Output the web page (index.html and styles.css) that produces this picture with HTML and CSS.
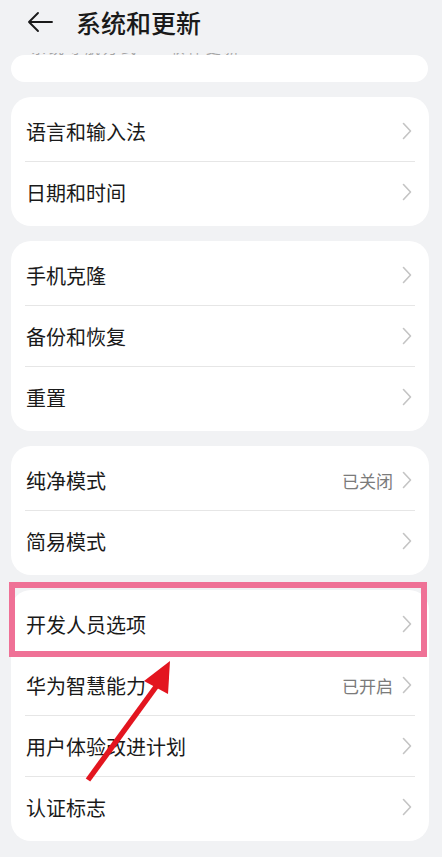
FILE: index.html
```html
<!DOCTYPE html>
<html lang="zh-CN">
<head>
<meta charset="utf-8">
<link rel="stylesheet" href="styles.css">
<title>系统和更新</title>
</head>
<body>
<div class="page">
  <header class="header">
    <svg class="back" width="26" height="22" viewBox="0 0 26 22">
      <path d="M25 11 H2 M11 2 L2 11 L11 20" fill="none" stroke="#1a1a1a" stroke-width="1.9" stroke-linecap="round" stroke-linejoin="round"/>
    </svg>
    <h1 class="title">系统和更新</h1>
  </header>

  <div class="ghost"><span class="ghost-text">系统导航方式 · 软件更新 ›</span></div>
  <div class="card card-partial"></div>

  <section class="card">
    <div class="row"><span class="label">语言和输入法</span><svg class="chev" width="10" height="18" viewBox="0 0 10 18"><path d="M1.5 1.5 L8.5 9 L1.5 16.5" fill="none" stroke="#c4c4c4" stroke-width="1.6" stroke-linecap="round" stroke-linejoin="round"/></svg></div>
    <div class="divider"></div>
    <div class="row"><span class="label">日期和时间</span><svg class="chev" width="10" height="18" viewBox="0 0 10 18"><path d="M1.5 1.5 L8.5 9 L1.5 16.5" fill="none" stroke="#c4c4c4" stroke-width="1.6" stroke-linecap="round" stroke-linejoin="round"/></svg></div>
  </section>

  <section class="card">
    <div class="row"><span class="label">手机克隆</span><svg class="chev" width="10" height="18" viewBox="0 0 10 18"><path d="M1.5 1.5 L8.5 9 L1.5 16.5" fill="none" stroke="#c4c4c4" stroke-width="1.6" stroke-linecap="round" stroke-linejoin="round"/></svg></div>
    <div class="divider"></div>
    <div class="row"><span class="label">备份和恢复</span><svg class="chev" width="10" height="18" viewBox="0 0 10 18"><path d="M1.5 1.5 L8.5 9 L1.5 16.5" fill="none" stroke="#c4c4c4" stroke-width="1.6" stroke-linecap="round" stroke-linejoin="round"/></svg></div>
    <div class="divider"></div>
    <div class="row"><span class="label">重置</span><svg class="chev" width="10" height="18" viewBox="0 0 10 18"><path d="M1.5 1.5 L8.5 9 L1.5 16.5" fill="none" stroke="#c4c4c4" stroke-width="1.6" stroke-linecap="round" stroke-linejoin="round"/></svg></div>
  </section>

  <section class="card">
    <div class="row"><span class="label">纯净模式</span><span class="value">已关闭</span><svg class="chev" width="10" height="18" viewBox="0 0 10 18"><path d="M1.5 1.5 L8.5 9 L1.5 16.5" fill="none" stroke="#c4c4c4" stroke-width="1.6" stroke-linecap="round" stroke-linejoin="round"/></svg></div>
    <div class="divider"></div>
    <div class="row"><span class="label">简易模式</span><svg class="chev" width="10" height="18" viewBox="0 0 10 18"><path d="M1.5 1.5 L8.5 9 L1.5 16.5" fill="none" stroke="#c4c4c4" stroke-width="1.6" stroke-linecap="round" stroke-linejoin="round"/></svg></div>
  </section>

  <section class="card card-last">
    <div class="highlight"></div>
    <div class="row"><span class="label">开发人员选项</span><svg class="chev" width="10" height="18" viewBox="0 0 10 18"><path d="M1.5 1.5 L8.5 9 L1.5 16.5" fill="none" stroke="#c4c4c4" stroke-width="1.6" stroke-linecap="round" stroke-linejoin="round"/></svg></div>
    <div class="divider divider-hidden"></div>
    <div class="row"><span class="label">华为智慧能力</span><span class="value">已开启</span><svg class="chev" width="10" height="18" viewBox="0 0 10 18"><path d="M1.5 1.5 L8.5 9 L1.5 16.5" fill="none" stroke="#c4c4c4" stroke-width="1.6" stroke-linecap="round" stroke-linejoin="round"/></svg></div>
    <div class="divider"></div>
    <div class="row"><span class="label">用户体验改进计划</span><svg class="chev" width="10" height="18" viewBox="0 0 10 18"><path d="M1.5 1.5 L8.5 9 L1.5 16.5" fill="none" stroke="#c4c4c4" stroke-width="1.6" stroke-linecap="round" stroke-linejoin="round"/></svg></div>
    <div class="divider"></div>
    <div class="row"><span class="label">认证标志</span><svg class="chev" width="10" height="18" viewBox="0 0 10 18"><path d="M1.5 1.5 L8.5 9 L1.5 16.5" fill="none" stroke="#c4c4c4" stroke-width="1.6" stroke-linecap="round" stroke-linejoin="round"/></svg></div>
  </section>

  <svg class="pointer" width="442" height="857" viewBox="0 0 442 857">
    <line x1="88" y1="780" x2="158" y2="684" stroke="#e3151f" stroke-width="5.5" stroke-linecap="butt"/>
    <polygon points="170,661 144,681 168,694" fill="#e3151f"/>
  </svg>
</div>
</body>
</html>
```

FILE: styles.css
```css
* { box-sizing: border-box; }

html, body {
  margin: 0;
  padding: 0;
  background: #f1f2f4;
}

body {
  font-family: "Noto Sans CJK SC", "Noto Sans", sans-serif;
  color: #1a1a1a;
}

.page {
  position: relative;
  width: 442px;
  height: 857px;
  overflow: hidden;
}

.header {
  height: 44px;
  display: flex;
  align-items: center;
  padding-left: 27px;
}

.back {
  display: block;
}

.title {
  margin: 0 0 0 23px;
  font-size: 25px;
  font-weight: 500;
  line-height: 30px;
  color: #1a1a1a;
}

.ghost {
  height: 3px;
  margin: 9px 0 0 31px;
  overflow: hidden;
  position: relative;
  z-index: 1;
}

.ghost-text {
  display: block;
  font-size: 15px;
  line-height: 16px;
  margin-top: -14px;
  color: #a5a5a5;
  letter-spacing: 3px;
  white-space: nowrap;
}

.card {
  background: #fff;
  border-radius: 20px;
  margin: 0 13px 15px 11px;
  padding: 4px 0;
  position: relative;
}

.card-partial {
  height: 27px;
  margin-top: -1px;
  border-radius: 14px;
  padding: 0;
  margin-right: 14px;
}

.card-last {
  margin-bottom: 0;
}

.row {
  height: 60px;
  display: flex;
  align-items: center;
  padding: 0 17px 0 15px;
}

.label {
  flex: 1;
  font-size: 20px;
  line-height: 24px;
  margin-top: 2px;
  color: #1a1a1a;
}

.value {
  font-size: 17px;
  line-height: 20px;
  margin-top: 1px;
  color: #7b7b7b;
  margin-right: 9px;
}

.chev {
  display: block;
  flex: none;
}

.divider {
  height: 1px;
  background: #e6e6e6;
  margin: 0 14px;
}

.divider-hidden {
  background: transparent;
}

.highlight {
  position: absolute;
  left: -2px;
  top: -8px;
  width: 418px;
  height: 75px;
  border: 6px solid #ef7196;
  pointer-events: none;
  z-index: 2;
}

.pointer {
  position: absolute;
  left: 0;
  top: 0;
  pointer-events: none;
  z-index: 3;
}
```
